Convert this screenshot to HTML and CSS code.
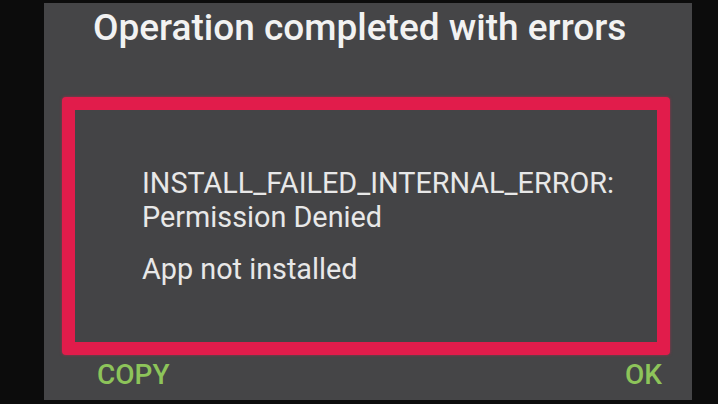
FILE: index.html
```html
<!DOCTYPE html>
<html>
<head>
<meta charset="utf-8">
<link rel="stylesheet" href="styles.css">
</head>
<body>
<div class="screen">
  <div class="dialog">
    <h1 class="title">Operation completed with errors</h1>
    <div class="highlight">
      <p class="msg">INSTALL_FAILED_INTERNAL_ERROR:<br>Permission Denied</p>
      <p class="msg second">App not installed</p>
    </div>
    <div class="actions">
      <span class="btn">COPY</span>
      <span class="btn">OK</span>
    </div>
  </div>
</div>
</body>
</html>
```
FILE: styles.css
```css
html, body {
  margin: 0;
  padding: 0;
  background: #0c0c0c;
}
.screen {
  width: 718px;
  height: 404px;
  display: flex;
  padding-top: 3px;
  box-sizing: border-box;
}
.dialog {
  margin-left: 44px;
  width: 648px;
  height: 397px;
  background: #454547;
  display: flex;
  flex-direction: column;
  font-family: Roboto, "Liberation Sans", sans-serif;
}
.title {
  margin: 0;
  padding: 1px 0 0 49px;
  font-size: 37px;
  font-weight: 500;
  color: #f2f2f2;
  line-height: 48px;
  height: 91px;
  box-sizing: border-box;
}
.highlight {
  margin: 3px 0 0 18px;
  width: 608px;
  height: 258px;
  box-sizing: border-box;
  border: 13px solid #e11c4b;
  border-radius: 4px;
  background: #444446;
  padding: 56px 0 0 67px;
  box-shadow: 0 0 3px rgba(225, 28, 75, 0.6);
}
.msg {
  margin: 0;
  font-size: 28.8px;
  line-height: 34px;
  color: #e8e8e8;
}
.msg.second {
  margin-top: 18px;
}
.actions {
  display: flex;
  justify-content: space-between;
  padding: 3px 30px 0 53px;
}
.btn {
  font-size: 28px;
  font-weight: 500;
  color: #8dc45a;
  line-height: 34px;
}
```
